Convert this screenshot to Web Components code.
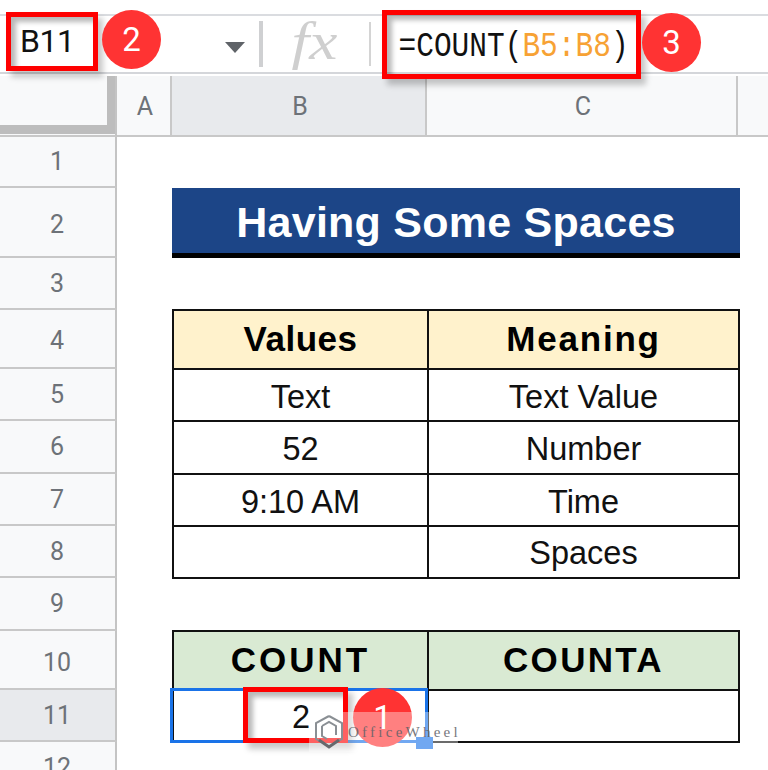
<!DOCTYPE html>
<html><head><meta charset="utf-8"><title>Having Some Spaces</title>
<style>html,body{margin:0;padding:0;background:#fff}body{width:768px;height:770px;overflow:hidden}</style>
</head><body>
<sheet-app>
  <formula-bar name="B11"><span>=COUNT(</span><b>B5:B8</b><span>)</span></formula-bar>
  <sheet-grid>
    <sheet-corner></sheet-corner>
    <col-head>A</col-head><col-head active>B</col-head><col-head>C</col-head><col-head></col-head>

    <row-head>1</row-head><sheet-spacer></sheet-spacer>
    <row-head tall style="padding-top:5px">2</row-head><title-cell>Having Some Spaces</title-cell>
    <row-head>3</row-head><sheet-spacer></sheet-spacer>

    <row-head tall>4</row-head>
    <data-cell c="b" head="#fff2cc" ls=".5">Values</data-cell><data-cell c="c" head="#fff2cc" ls="1.8">Meaning</data-cell>
    <row-head>5</row-head>
    <data-cell c="b">Text</data-cell><data-cell c="c">Text Value</data-cell>
    <row-head>6</row-head>
    <data-cell c="b">52</data-cell><data-cell c="c">Number</data-cell>
    <row-head>7</row-head>
    <data-cell c="b">9:10 AM</data-cell><data-cell c="c">Time</data-cell>
    <row-head>8</row-head>
    <data-cell c="b" last></data-cell><data-cell c="c" last>Spaces</data-cell>
    <row-head>9</row-head><sheet-spacer></sheet-spacer>
    <row-head tall style="padding-top:5px">10</row-head>
    <data-cell c="b" head="#d9ead3" ls="3">COUNT</data-cell><data-cell c="c" head="#d9ead3" ls="2.3">COUNTA</data-cell>
    <row-head active>11</row-head>
    <data-cell c="b" last align="right">2</data-cell><data-cell c="c" last></data-cell>
    <row-head>12</row-head><sheet-spacer></sheet-spacer>
  </sheet-grid>

  <cell-selection></cell-selection>
  <red-box style="--x:6px;--y:12px;--w:92px;--h:59px"></red-box>
  <red-box style="--x:382px;--y:10px;--w:259px;--h:69px"></red-box>
  <red-box style="--x:243px;--y:687px;--w:105px;--h:56px"></red-box>
  <step-badge style="--x:102px;--y:10px">2</step-badge>
  <step-badge style="--x:642px;--y:13px">3</step-badge>
  <step-badge style="--x:353px;--y:688px">1</step-badge>
  <water-mark></water-mark>
</sheet-app>

<script>
function def(name, css, html, extra){
  customElements.define(name, class extends HTMLElement{
    constructor(){super();const s=this.attachShadow({mode:'open'});s.innerHTML='<style>'+css+'</style>'+html;}
    connectedCallback(){extra&&extra(this,this.shadowRoot);}
  });
}
def('sheet-app',':host{display:block;position:relative;width:768px;height:770px;overflow:hidden;background:#fff;font-family:"Liberation Sans",Arial,sans-serif}','<slot></slot>');

def('formula-bar',`
:host{display:flex;align-items:center;box-sizing:border-box;height:60px;margin-top:14px;border-top:2px solid #dadce0;border-bottom:2px solid #d4d6da;background:#fff;color:#111}
.name{width:205px;padding-left:20px;font:32px/1 Roboto,sans-serif;letter-spacing:-.4px;margin-top:-6px}
.tri{width:0;height:0;border:10px solid transparent;border-top:11px solid #5f6368;border-bottom:0;margin-right:14px;margin-top:7px}
.sep{width:3.5px;height:46px;background:#cfd0d2}
.fx{width:107px;text-align:center;font:italic 52px/1 "Liberation Serif",serif;color:#cfcfcf;margin-top:-4px;margin-left:-2px;margin-right:1px;transform:scaleX(1.22)}
.sep2{width:2px;height:44px;background:#d4d4d4}
.f{margin-left:28px;font:29.5px/1 "Liberation Mono",monospace;white-space:nowrap;margin-top:7px;transform:scaleY(1.2)}
::slotted(b){font-weight:400;color:#f7a234}
`,`<div class="name"></div><div class="tri"></div><div class="sep"></div><div class="fx">fx</div><div class="sep2"></div><div class="f"><slot></slot></div>`,
(h,s)=>{s.querySelector('.name').textContent=h.getAttribute('name')});

def('sheet-grid',`
:host{display:grid;margin-top:2px;grid-template-columns:117px 55px 255px 311px 30px;
grid-template-rows:61px 51px 70px 52px 59px 52px 53px 52px 52px 53px 59px 52px 52px}
`,'<slot></slot>');

def('sheet-corner',`
:host{display:block;background:#f8f9fa;border-right:2px solid #c4c4c4;box-sizing:border-box;position:relative;border-bottom:2px solid #c8c8c8}
.v{position:absolute;right:0;top:0;width:8px;bottom:1px;background:#bdbdbd}
.h{position:absolute;left:0;right:0;bottom:1px;height:9px;background:#bdbdbd}
`,'<div class="v"></div><div class="h"></div>');

def('col-head',`
:host{display:flex;align-items:center;justify-content:center;box-sizing:border-box;background:#f8f9fa;border-bottom:2px solid #c8c8c8;border-right:2px solid #c8c8c8;color:#6d7278;font:25px/1 Roboto,sans-serif;padding:2px 0 0 3px}
:host([active]){background:#e8eaed}
:host(:last-of-type){border-right:0}
`,'<slot></slot>');

def('row-head',`
:host{display:flex;align-items:center;justify-content:center;box-sizing:border-box;grid-column:1;background:#f8f9fa;border-bottom:2px solid #c8c8c8;border-right:2px solid #c4c4c4;color:#6d7278;font:25px/1 Roboto,sans-serif;padding-right:1px}
:host([active]){background:#e8eaed}
:host([tall]){padding-top:3px}
`,'<slot></slot>');

def('sheet-spacer',':host{display:block;grid-column:2/-1}','');

def('title-cell',`
:host{display:flex;align-items:center;justify-content:center;grid-column:3/5;margin-right:-2px;box-sizing:border-box;background:#1c4587;border-bottom:5px solid #000;color:#fff;font:bold 43px/1 "Liberation Sans",Arial,sans-serif;letter-spacing:.25px;padding-top:4px;white-space:nowrap}
`,'<slot></slot>');

def('data-cell',`
:host{display:flex;align-items:center;justify-content:center;box-sizing:border-box;margin-top:-1px;border-left:2px solid #111;border-top:2px solid #111;color:#111;font:32.5px/1 "Liberation Sans",Arial,sans-serif;background:#fff;white-space:nowrap;padding-top:3px}
:host([c=b]){grid-column:3}
:host([c=c]){grid-column:4;border-right:2px solid #111;margin-right:-2px}
:host([last]){border-bottom:2px solid #111;margin-bottom:-1px}
:host([head]){font-weight:700;font-size:35px;color:#000;padding:0 0 3px}
:host([align=right]){justify-content:flex-end;padding-right:117px}
`,'<slot></slot>',h=>{
  if(h.hasAttribute('head')){h.style.background=h.getAttribute('head');h.style.letterSpacing=h.getAttribute('ls')+'px';}
});

def('cell-selection',`
:host{position:absolute;left:170px;top:688px;width:258px;height:55px;box-sizing:border-box;border:3.5px solid #1a73e8}
.handle{position:absolute;right:-8px;bottom:-9px;width:17px;height:12px;background:#1a73e8}
`,'<div class="handle"></div>');

def('red-box',`
:host{position:absolute;left:var(--x);top:var(--y);width:var(--w);height:var(--h);box-sizing:border-box;border:5.5px solid #fe0000;box-shadow:5px 6px 6px rgba(0,0,0,.22),inset 5px 5px 5px rgba(0,0,0,.28)}
`,'');

def('step-badge',`
:host{position:absolute;left:var(--x);top:var(--y);width:59px;height:59px;border-radius:50%;background:#ff3333;color:#fff;display:flex;align-items:center;justify-content:center;font:33px/1 Roboto,sans-serif}
`,'<slot></slot>');

def('water-mark',`
:host{position:absolute;left:309px;top:712px;width:149px;height:40px;background:rgba(255,255,255,.38);font:15px/1 "Liberation Serif",serif;color:#5f6268}
svg{position:absolute;left:6px;top:3px;overflow:visible}
span{position:absolute;left:39px;top:12.5px;letter-spacing:3.25px;white-space:nowrap;opacity:.85}
`,`<svg width="28" height="33" viewBox="0 0 28 33" fill="none" stroke="#8a8f94" stroke-width="2"><path d="M14 1 L27 8 V18 M14 1 L1 8 V24 L10 29 M27 18 V24 L18 29 M7 11 L14 7 L21 11 V20 M7 11 V21 L12 24"/><path d="M4 25 L14 32 L24 25" stroke="#66696d" stroke-width="3"/></svg><span>OfficeWheel</span>`);
</script>
</body></html>
